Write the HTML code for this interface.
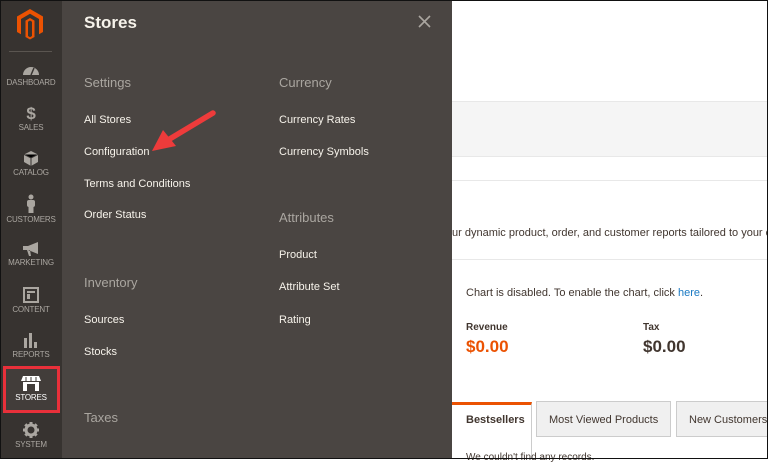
<!DOCTYPE html><html><head><style>
*{margin:0;padding:0;box-sizing:border-box}
body{width:768px;height:459px;overflow:hidden;position:relative;background:#fff;font-family:"Liberation Sans",sans-serif}
.abs{position:absolute}
#side{left:0;top:0;width:62px;height:459px;background:#373330}
.it{position:absolute;left:0;width:62px;text-align:center;color:#aaa6a0;font-size:8px;letter-spacing:-0.2px}
.it svg{display:block;margin:0 auto 2px}
#panel{left:62px;top:0;width:390px;height:459px;background:#4a4542;color:#f7f3eb}
.h{position:absolute;font-size:13px;color:#aaa6a0}
.l{position:absolute;font-size:11px;color:#f7f3eb}
.t{position:absolute;font-size:11px;color:#41362f}
</style></head><body>
<div class="abs" style="left:452px;top:101px;width:316px;height:56px;background:#f5f5f5;border-top:1px solid #e8e8e8;border-bottom:1px solid #e8e8e8"></div>
<div class="abs" style="left:452px;top:180px;width:316px;height:1px;background:#e8e8e8"></div>
<div class="abs" style="left:452px;top:259px;width:316px;height:1px;background:#e8e8e8"></div>
<div class="t" style="left:452px;top:227px;white-space:nowrap">ur dynamic product, order, and customer reports tailored to your c</div>
<div class="t" style="left:466px;top:287px">Chart is disabled. To enable the chart, click <span style="color:#1979c3">here</span>.</div>
<div class="t" style="left:466px;top:322px;font-size:10px;font-weight:bold">Revenue</div>
<div class="t" style="left:466px;top:337px;font-size:17px;color:#eb5202;font-weight:bold">$0.00</div>
<div class="t" style="left:643px;top:322px;font-size:10px;font-weight:bold">Tax</div>
<div class="t" style="left:643px;top:337px;font-size:17px;color:#41362f;font-weight:bold">$0.00</div>
<div class="abs" style="left:452px;top:402px;width:80px;height:57px;border-top:3px solid #eb5202;background:#fff;border-right:1px solid #ccc"></div>
<div class="t" style="left:466px;top:414px;font-weight:bold">Bestsellers</div>
<div class="abs" style="left:536px;top:401px;width:135px;height:36px;background:#f0f0f0;border:1px solid #ccc"></div>
<div class="t" style="left:549px;top:414px">Most Viewed Products</div>
<div class="abs" style="left:676px;top:401px;width:100px;height:36px;background:#f0f0f0;border:1px solid #ccc"></div>
<div class="t" style="left:689px;top:414px">New Customers</div>
<div class="t" style="left:466px;top:452px;font-size:10px">We couldn't find any records.</div>

<div id="side" class="abs">
<svg class="abs" style="left:16px;top:8px" width="28" height="32" viewBox="0 0 28 32"><path d="M14 1L27 8.5V24L23 26.3V11L14 5.8 5 11V26.3L1 24V8.5Z M14 10L18.5 12.6V29L14 31.5 9.5 29V12.6Z M14 12.5L12 13.7V28L14 29.2 16 28V13.7Z" fill="#eb5202" fill-rule="evenodd"/></svg>
<div class="abs" style="left:9px;top:51px;width:43px;height:1px;background:#5a5550"></div>
<div class="it" style="top:64px"><svg width="18" height="12" viewBox="0 0 18 12"><path d="M1 11A8 8 0 0 1 17 11Z" fill="#aaa6a0"/><path d="M9 11L12 4" stroke="#373330" stroke-width="1.5"/></svg>DASHBOARD</div>
<div class="it" style="top:106px"><div style="font-size:17px;font-weight:bold;line-height:15px;margin-bottom:2px">$</div>SALES</div>
<div class="it" style="top:151px"><svg width="14" height="15" viewBox="0 0 14 15"><path d="M7 0L14 3.5V11L7 15 0 11V3.5Z" fill="#aaa6a0"/><path d="M0 3.5L7 7 14 3.5M7 7V15" stroke="#373330"/></svg>CATALOG</div>
<div class="it" style="top:194px"><svg width="10" height="19" viewBox="0 0 10 19"><circle cx="5" cy="3" r="2.5" fill="#aaa6a0"/><rect x="1" y="6" width="8" height="7" rx="2" fill="#aaa6a0"/><rect x="2.5" y="12" width="5" height="7" fill="#aaa6a0"/></svg>CUSTOMERS</div>
<div class="it" style="top:242px"><svg width="18" height="14" viewBox="0 0 18 14"><path d="M1 4H6L16 0V12L6 8H1Z M5 8L7 14H9L8 8Z" fill="#aaa6a0"/></svg>MARKETING</div>
<div class="it" style="top:287px"><svg width="16" height="16" viewBox="0 0 16 16"><rect x="1" y="1" width="14" height="14" fill="none" stroke="#aaa6a0" stroke-width="2"/><rect x="4" y="4" width="8" height="2" fill="#aaa6a0"/><rect x="4" y="7" width="3" height="5" fill="#aaa6a0"/></svg>CONTENT</div>
<div class="it" style="top:332px"><svg width="16" height="16" viewBox="0 0 16 16"><rect x="1" y="6" width="3" height="10" fill="#aaa6a0"/><rect x="6" y="1" width="3" height="15" fill="#aaa6a0"/><rect x="11" y="10" width="3" height="6" fill="#aaa6a0"/></svg>REPORTS</div>
<div class="abs" style="left:3px;top:366px;width:57px;height:47px;border:3px solid #e8303a;background:#423d3a"></div>
<div class="it" style="top:376px;color:#fff"><svg width="20" height="15" viewBox="0 0 20 15"><path d="M2 0H18L20 5H0Z" fill="#fff"/><path d="M5 1V5M10 1V5M15 1V5" stroke="#423d3a"/><path d="M2 6H18V15H2Z" fill="#fff"/><rect x="6" y="8" width="8" height="7" fill="#423d3a"/></svg>STORES</div>
<div class="it" style="top:422px"><svg width="16" height="16" viewBox="0 0 16 16"><circle cx="8" cy="8" r="5" fill="none" stroke="#aaa6a0" stroke-width="3"/><path d="M8 0V16M0 8H16M2.3 2.3L13.7 13.7M13.7 2.3L2.3 13.7" stroke="#aaa6a0" stroke-width="3" stroke-dasharray="2.5 11 2.5 100"/></svg>SYSTEM</div>
</div>

<div id="panel" class="abs">
<div class="abs" style="left:22px;top:13px;font-size:17px;font-weight:bold;color:#f7f3eb">Stores</div>
<svg class="abs" style="left:356px;top:15px" width="13" height="13"><path d="M1 1L12 12M12 1L1 12" stroke="#aaa6a0" stroke-width="1.6"/></svg>
<div class="h" style="left:22px;top:75px">Settings</div>
<div class="l" style="left:22px;top:114px">All Stores</div>
<div class="l" style="left:22px;top:146px">Configuration</div>
<div class="l" style="left:22px;top:178px">Terms and Conditions</div>
<div class="l" style="left:22px;top:209px">Order Status</div>
<div class="h" style="left:22px;top:275px">Inventory</div>
<div class="l" style="left:22px;top:314px">Sources</div>
<div class="l" style="left:22px;top:346px">Stocks</div>
<div class="h" style="left:22px;top:410px">Taxes</div>
<div class="h" style="left:217px;top:75px">Currency</div>
<div class="l" style="left:217px;top:114px">Currency Rates</div>
<div class="l" style="left:217px;top:146px">Currency Symbols</div>
<div class="h" style="left:217px;top:210px">Attributes</div>
<div class="l" style="left:217px;top:249px">Product</div>
<div class="l" style="left:217px;top:281px">Attribute Set</div>
<div class="l" style="left:217px;top:314px">Rating</div>
</div>
<svg class="abs" style="left:0;top:0" width="768" height="459"><path d="M213 113L168 140" stroke="#ee3b3b" stroke-width="5.5" stroke-linecap="round"/><path d="M152 151L163 130L176 146Z" fill="#ee3b3b"/><rect x="0.5" y="0.5" width="767" height="458" fill="none" stroke="#111" stroke-width="1"/></svg>
</body></html>
